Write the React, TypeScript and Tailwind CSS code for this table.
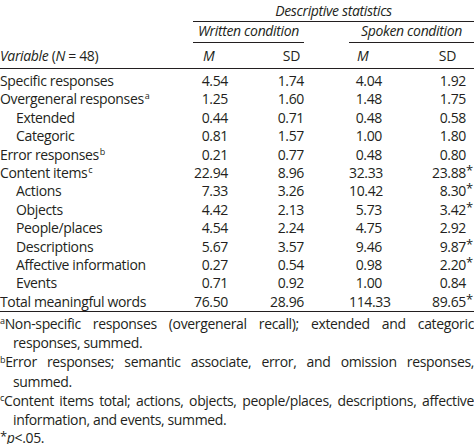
type Row = {
  label: string;
  sup?: string;
  indent?: boolean;
  v: string[];
  star?: boolean;
};

const rows: Row[] = [
  { label: "Specific responses", v: ["4.54", "1.74", "4.04", "1.92"] },
  { label: "Overgeneral responses", sup: "a", v: ["1.25", "1.60", "1.48", "1.75"] },
  { label: "Extended", indent: true, v: ["0.44", "0.71", "0.48", "0.58"] },
  { label: "Categoric", indent: true, v: ["0.81", "1.57", "1.00", "1.80"] },
  { label: "Error responses", sup: "b", v: ["0.21", "0.77", "0.48", "0.80"] },
  { label: "Content items", sup: "c", v: ["22.94", "8.96", "32.33", "23.88"], star: true },
  { label: "Actions", indent: true, v: ["7.33", "3.26", "10.42", "8.30"], star: true },
  { label: "Objects", indent: true, v: ["4.42", "2.13", "5.73", "3.42"], star: true },
  { label: "People/places", indent: true, v: ["4.54", "2.24", "4.75", "2.92"] },
  { label: "Descriptions", indent: true, v: ["5.67", "3.57", "9.46", "9.87"], star: true },
  { label: "Affective information", indent: true, v: ["0.27", "0.54", "0.98", "2.20"], star: true },
  { label: "Events", indent: true, v: ["0.71", "0.92", "1.00", "0.84"] },
  { label: "Total meaningful words", v: ["76.50", "28.96", "114.33", "89.65"], star: true },
];

const grid = "grid grid-cols-[193px_56px_55px_45px_51px_74px]";

const App = () => {
  return (
    <div
      className="w-[474px] h-[444px] overflow-hidden bg-white text-[#231f20] text-[14px] tracking-[-0.35px]"
      style={{ fontFamily: '"Open Sans", "Noto Sans", sans-serif' }}
    >
      {/* header */}
      <div className={grid + " h-[18px]"}>
        <div className="col-start-2 col-span-5 flex items-center justify-center italic whitespace-nowrap border-b border-[#231f20]">
          Descriptive statistics
        </div>
      </div>
      <div className={grid + " h-[25px]"}>
        <div className="col-start-2 col-span-2 flex items-center justify-center italic whitespace-nowrap border-b border-[#231f20]">
          Written condition
        </div>
        <div className="col-start-5 col-span-2 flex items-center justify-center italic whitespace-nowrap border-b border-[#231f20]">
          Spoken condition
        </div>
      </div>
      <div className={grid + " h-[26px] items-center border-b border-[#231f20]"}>
        <div>
          <i>Variable</i> (<i>N</i> = 48)
        </div>
        <div className="pl-[10px] italic">M</div>
        <div className="text-right pr-[4px]">SD</div>
        <div />
        <div className="pl-[8px] italic">M</div>
        <div className="text-right pr-[18px]">SD</div>
      </div>

      {/* body */}
      <div className="pt-[3px] border-b border-[#231f20]">
        {rows.map((r, i) => (
          <div key={i} className={grid + " h-[18.4px] leading-[18.4px]"}>
            <div className={r.indent ? "pl-[16px] whitespace-nowrap" : "whitespace-nowrap"}>
              {r.label}
              {r.sup && <sup className="text-[9px] ml-[1px] -top-[0.55em]">{r.sup}</sup>}
            </div>
            <div className="text-right pr-[21px]">{r.v[0]}</div>
            <div className="text-right">{r.v[1]}</div>
            <div />
            <div className="text-right pr-[18px]">{r.v[2]}</div>
            <div className="text-right pr-[8px]">
              <span className="relative">
                {r.v[3]}
                {r.star && <span className="absolute left-full -top-[2px] text-[13px]">*</span>}
              </span>
            </div>
          </div>
        ))}
      </div>

      {/* notes */}
      <div className="pt-[2px] leading-[19.2px]">
        <div className="text-justify [text-align-last:justify]">
          <sup className="text-[9px] -top-[0.55em]">a</sup>Non-specific responses (overgeneral recall); extended and categoric
        </div>
        <div className="pl-[13px]">responses, summed.</div>
        <div className="text-justify [text-align-last:justify]">
          <sup className="text-[9px] -top-[0.55em]">b</sup>Error responses; semantic associate, error, and omission responses,
        </div>
        <div className="pl-[13px]">summed.</div>
        <div className="text-justify [text-align-last:justify]">
          <sup className="text-[9px] -top-[0.55em]">c</sup>Content items total; actions, objects, people/places, descriptions, affective
        </div>
        <div className="pl-[13px]">information, and events, summed.</div>
        <div className="mt-[1px] leading-[15px]">
          <span className="relative -top-[2px] text-[13px]">*</span>
          <i>p</i>&lt;.05.
        </div>
      </div>
    </div>
  );
};

export default App;
